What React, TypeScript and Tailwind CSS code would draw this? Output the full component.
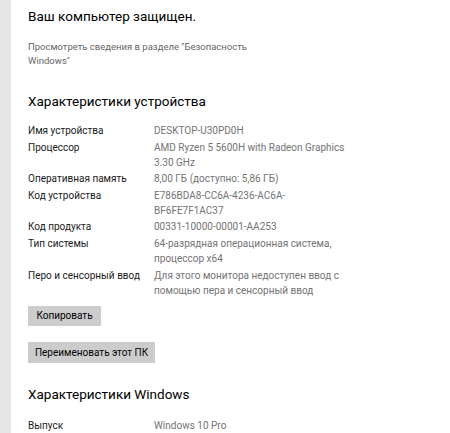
const font = { fontFamily: 'Roboto, "Noto Sans", sans-serif' };

const rows: [string, string[]][] = [
  ["Имя устройства", ["DESKTOP-U30PD0H"]],
  ["Процессор", ["AMD Ryzen 5 5600H with Radeon Graphics", "3.30 GHz"]],
  ["Оперативная память", ["8,00 ГБ (доступно: 5,86 ГБ)"]],
  ["Код устройства", ["E786BDA8-CC6A-4236-AC6A-", "BF6FE7F1AC37"]],
  ["Код продукта", ["00331-10000-00001-AA253"]],
  ["Тип системы", ["64-разрядная операционная система,", "процессор x64"]],
  ["Перо и сенсорный ввод", ["Для этого монитора недоступен ввод с", "помощью пера и сенсорный ввод"]],
];

function Row({ label, value }: { label: string; value: string[] }) {
  return (
    <div className="flex whitespace-nowrap text-[10px] leading-[15px]">
      <div className="w-[126px] shrink-0 text-[#1a1a1a]">{label}</div>
      <div className="text-[#737373]">
        {value.map((v) => (
          <div key={v}>{v}</div>
        ))}
      </div>
    </div>
  );
}

export default function App() {
  return (
    <div className="flex h-[433px] w-[450px] overflow-hidden bg-white" style={font}>
      <div className="w-[11px] shrink-0 bg-[#e6e6e6]" />
      <div className="flex flex-col items-start pl-[17px] pt-[6px]">
        <h2 className="text-[13.5px] leading-[20px] text-black">Ваш компьютер защищен.</h2>
        <p className="mt-[14px] whitespace-nowrap text-[9.5px] leading-[14px] text-[#666666]">
          Просмотреть сведения в разделе "Безопасность
          <br />
          Windows"
        </p>

        <h2 className="mt-[23px] text-[13.5px] leading-[20px] text-black">Характеристики устройства</h2>
        <div className="mt-[12px] flex flex-col gap-[1.6px]">
          {rows.map(([l, v]) => (
            <Row key={l} label={l} value={v} />
          ))}
        </div>

        <div className="mt-[8px] flex h-[22px] w-[73px] items-center justify-center whitespace-nowrap bg-[#cccccc] text-[10px] text-black">
          Копировать
        </div>
        <div className="mt-[16px] flex h-[23px] w-[127px] items-center justify-center whitespace-nowrap bg-[#cccccc] text-[10px] text-black">
          Переименовать этот ПК
        </div>

        <h2 className="mt-[21px] text-[13.5px] leading-[20px] text-black">Характеристики Windows</h2>
        <div className="mt-[14px]">
          <Row label="Выпуск" value={["Windows 10 Pro"]} />
        </div>
      </div>
    </div>
  );
}
